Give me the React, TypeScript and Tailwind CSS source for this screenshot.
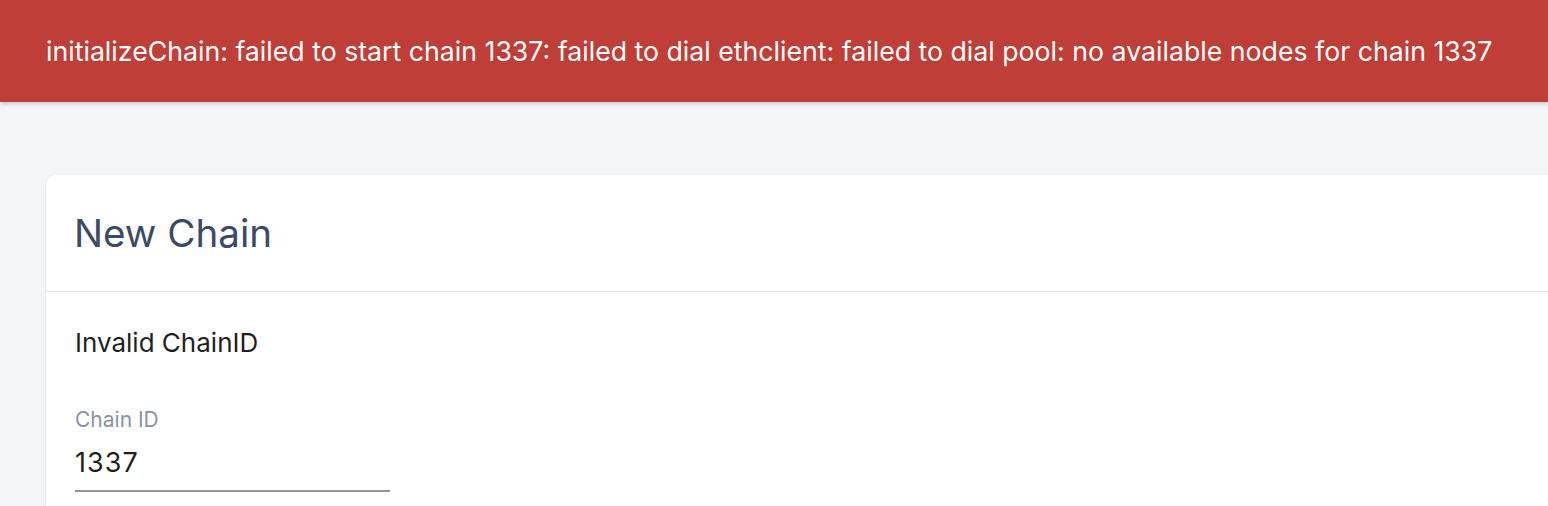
export default function App() {
  return (
    <div
      className="h-screen w-full overflow-hidden bg-[#f4f5f7]"
      style={{ fontFamily: 'Inter, Roboto, "Liberation Sans", sans-serif' }}
    >
      {/* Error banner */}
      <div className="relative z-10 flex h-[102px] items-center bg-[#bf3e38] px-[46px] shadow-[0_2px_4px_rgba(0,0,0,0.18)]">
        <p className="whitespace-nowrap text-[26.7px] leading-[32px] text-white">
          initializeChain: failed to start chain 1337: failed to dial ethclient: failed to dial pool: no available nodes for chain 1337
        </p>
      </div>

      {/* Content */}
      <main className="pl-[46px] pt-[73px]">
        <div className="w-[1560px] rounded-[10px] bg-white shadow-[0_1px_3px_rgba(0,0,0,0.12)]">
          <div className="flex h-[116px] items-center pl-[28px]">
            <h1 className="text-[38.6px] leading-[50px] text-[#3c4a67]">New Chain</h1>
          </div>
          <div className="h-px bg-[#e3e3e3]" />
          <div className="pl-[29px] pt-[34px] pb-[60px]">
            <p className="text-[26px] leading-[33px] text-[#1f1f1f]">Invalid ChainID</p>
            <div className="mt-[48px] w-[315px]">
              <label className="block text-[21px] leading-[25px] text-[#8a93a3]">Chain ID</label>
              <div className="mt-[14px] border-b-2 border-[#949494] pb-[10px] text-[27px] leading-[34px] tracking-[0.04em] text-[#1f1f1f]">
                1337
              </div>
            </div>
          </div>
        </div>
      </main>
    </div>
  )
}
